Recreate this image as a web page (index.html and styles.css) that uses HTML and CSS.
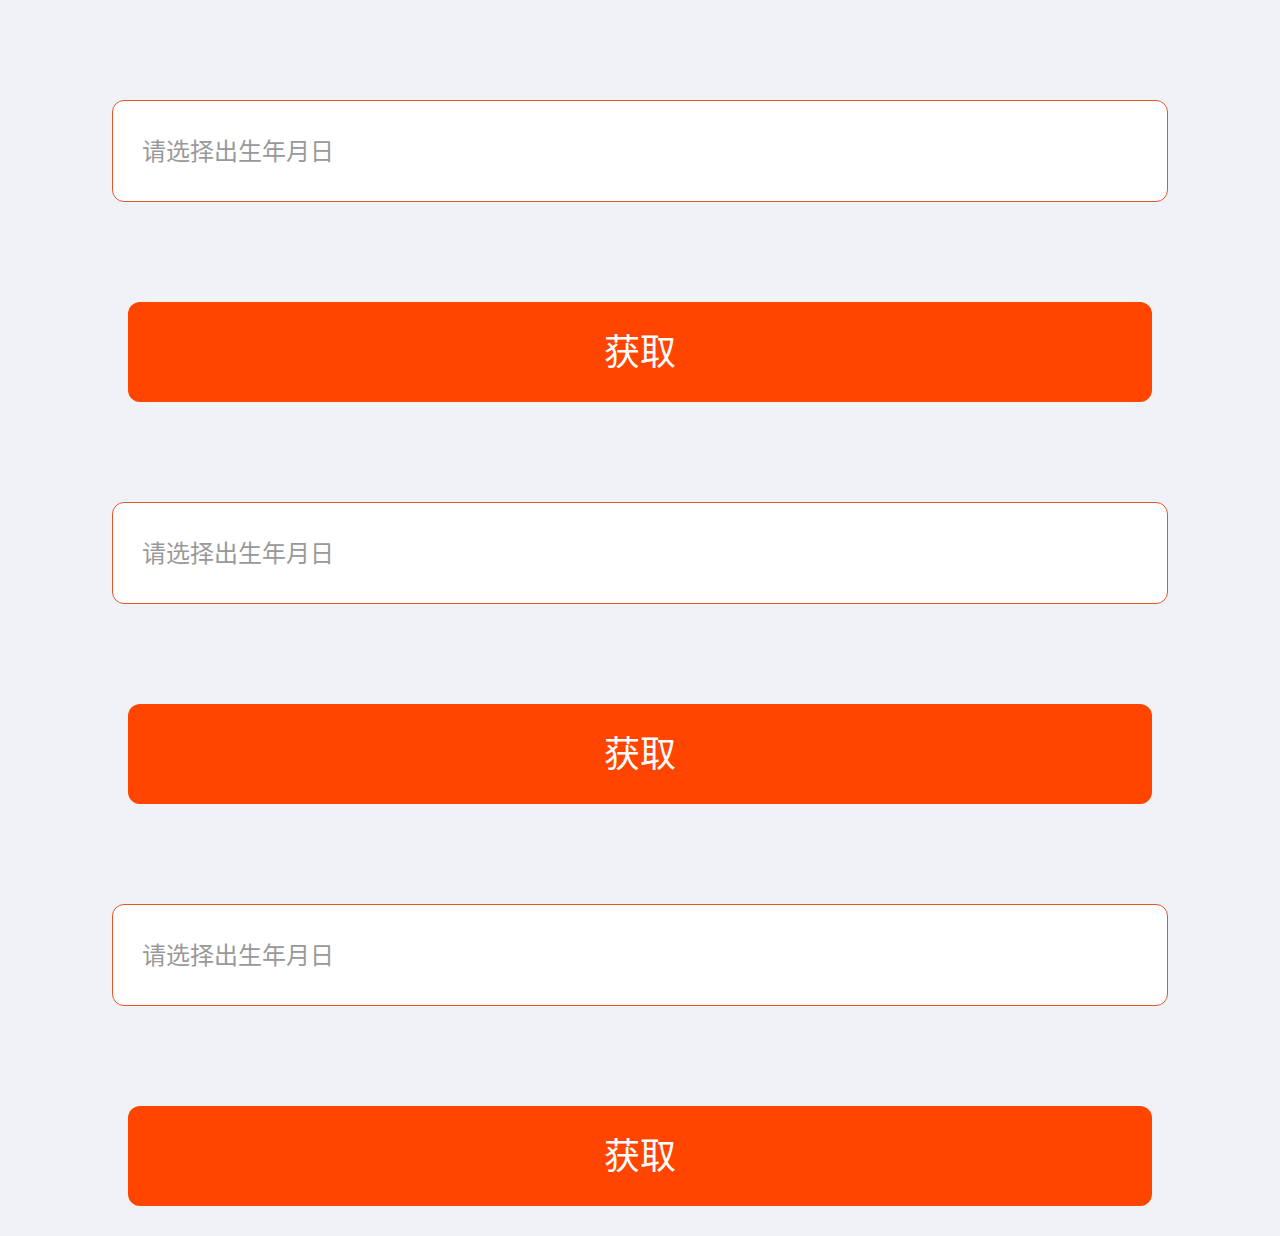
FILE: index.html
```html
<!DOCTYPE html>
<html>
<head>
  <meta charset="utf-8">
  <meta name="viewport" content="width=device-width, initial-scale=1.0">
  <link rel="stylesheet" href="styles.css">
</head>
<body>
  <div class="page">
    <div class="picker">
      <div class="picker-input">请选择出生年月日</div>
      <div class="picker-btn">获取</div>
    </div>
    <div class="picker">
      <div class="picker-input">请选择出生年月日</div>
      <div class="picker-btn">获取</div>
    </div>
    <div class="picker">
      <div class="picker-input">请选择出生年月日</div>
      <div class="picker-btn">获取</div>
    </div>
  </div>
</body>
</html>
```

FILE: styles.css
```css
* {
  margin: 0;
  padding: 0;
  box-sizing: border-box;
}

body {
  background: #f0f2f5;
  font-family: "Noto Sans CJK SC", "Noto Sans", sans-serif;
}

.page {
  display: flex;
  flex-direction: column;
  gap: 100px;
  padding: 100px 112px 30px;
}

.picker {
  display: flex;
  flex-direction: column;
  gap: 100px;
}

.picker-input {
  height: 102px;
  display: flex;
  align-items: center;
  padding: 0 30px 4px 29px;
  background: #fff;
  border: 1px solid #e5552a;
  border-radius: 12px;
  color: #999;
  font-size: 24px;
}

.picker-btn {
  height: 100px;
  margin: 0 16px;
  padding-bottom: 6px;
  display: flex;
  align-items: center;
  justify-content: center;
  background: #ff4500;
  border-radius: 12px;
  color: #fff;
  font-size: 36px;
}
```
